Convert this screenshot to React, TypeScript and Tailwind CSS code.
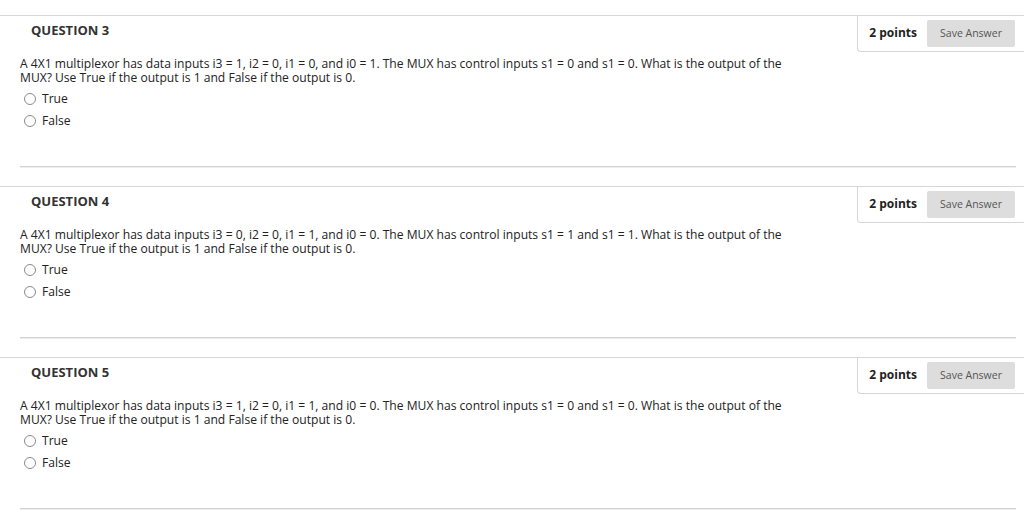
import React from "react";

type Question = {
  num: number;
  inputs: string;
  control: string;
};

const questions: Question[] = [
  {
    num: 3,
    inputs: "i3 = 1, i2 = 0, i1 = 0, and i0 = 1",
    control: "s1 = 0 and s1 = 0",
  },
  {
    num: 4,
    inputs: "i3 = 0, i2 = 0, i1 = 1, and i0 = 0",
    control: "s1 = 1 and s1 = 1",
  },
  {
    num: 5,
    inputs: "i3 = 1, i2 = 0, i1 = 1, and i0 = 0",
    control: "s1 = 0 and s1 = 0",
  },
];

const RadioOption = ({ label }: { label: string }) => (
  <label className="flex items-center h-[22px] pl-[4px] gap-[6px] cursor-pointer">
    <span className="w-[12px] h-[12px] rounded-full border border-[#8a8a8a] bg-white" />
    <span>{label}</span>
  </label>
);

const QuestionBlock = ({ q }: { q: Question }) => {
  return (
    <div className="border-t border-[#d6d6d6] mb-[18px]">
      <div className="flex justify-between items-start">
        <h3 className="pl-[31px] pt-[6px] text-[13px] font-bold text-[#333] leading-[17px]">
          QUESTION {q.num}
        </h3>
        <div className="flex items-center h-[36px] border-l border-b border-[#d6d6d6] rounded-bl-[4px] pl-[11px] pr-[9px] gap-[10px]">
          <span className="text-[12px] font-bold text-[#222] leading-[16px] mb-[2px]">2 points</span>
          <button
            type="button"
            className="w-[88px] h-[27px] bg-[#dddddd] rounded-[2px] text-[10.5px] text-[#555]"
          >
            Save Answer
          </button>
        </div>
      </div>

      <div className="px-[20px] pt-[5px] text-[12.1px] leading-[14px] text-[#222]">
        <p>
          A 4X1 multiplexor has data inputs {q.inputs}. The MUX has control
          inputs {q.control}. What is the output of the
          <br />
          MUX? Use True if the output is 1 and False if the output is 0.
        </p>
        <div className="mt-[3px] flex flex-col">
          <RadioOption label="True" />
          <RadioOption label="False" />
        </div>
      </div>

      <div className="mx-[20px] mt-[34px] border-t border-[#d2d2d2] border-b border-b-[#ededed] h-0 w-[996px]" />
    </div>
  );
};

export default function App() {
  return (
    <div
      className="min-h-screen bg-white pt-[15px] text-[#222]"
      style={{ fontFamily: '"Open Sans", "Noto Sans", sans-serif' }}
    >
      {questions.map((q) => (
        <QuestionBlock key={q.num} q={q} />
      ))}
    </div>
  );
}
